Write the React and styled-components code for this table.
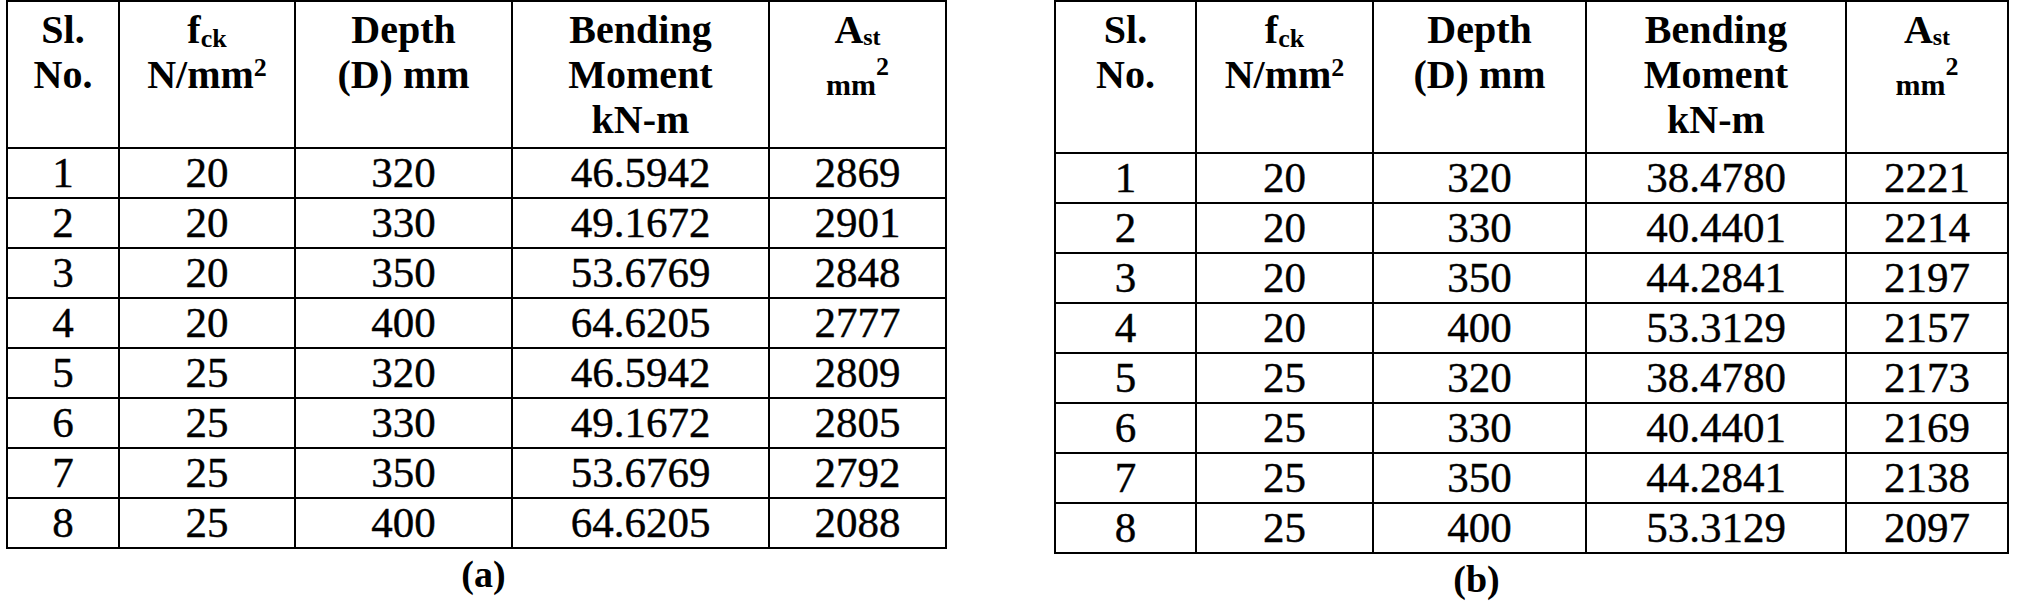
import React from 'react';
import styled, { createGlobalStyle } from 'styled-components';

const GlobalStyle = createGlobalStyle`
  html, body {
    margin: 0;
    padding: 0;
    background: #fff;
  }
  body {
    font-family: "Liberation Serif", "Times New Roman", serif;
    color: #000;
  }
`;

const Page = styled.div`
  display: flex;
  align-items: flex-start;
  gap: 107px;
  padding-left: 6px;
  width: 2021px;
  height: 605px;
  box-sizing: border-box;
  overflow: hidden;
`;

const Figure = styled.div`
  display: flex;
  flex-direction: column;
`;

const Table = styled.table`
  border-collapse: collapse;
  table-layout: fixed;
  width: ${(p) => p.$width}px;
`;

const Col = styled.col`
  width: ${(p) => p.$w}px;
`;

const HeadRow = styled.tr`
  height: ${(p) => p.$h}px;
`;

const Head = styled.th`
  border: 2px solid #000;
  padding: 5px 0 0;
  vertical-align: top;
  text-align: center;
  font-size: 40px;
  font-weight: bold;
  line-height: 45px;
`;

const Sub = styled.sub`
  font-size: ${(p) => p.$size || 26}px;
  line-height: 0;
  vertical-align: ${(p) => p.$drop || -4}px;
`;

const Sup = styled.sup`
  font-size: 26px;
  line-height: 0;
  vertical-align: 12px;
`;

const Unit = styled.span`
  display: block;
  font-size: 30px;
  line-height: 66px;
`;

const UnitSup = styled.sup`
  font-size: 26px;
  line-height: 0;
  vertical-align: 20px;
`;

const Row = styled.tr`
  height: 50px;
`;

const Cell = styled.td`
  border: 2px solid #000;
  padding: 0;
  text-align: center;
  vertical-align: middle;
  font-size: 43px;
  line-height: 46px;
  -webkit-text-stroke: 0.4px #000;
`;

const Caption = styled.div`
  margin-top: 3px;
  text-align: center;
  font-size: 38px;
  font-weight: bold;
  line-height: 44px;
  padding-left: ${(p) => Math.max(0, p.$shift * 2)}px;
  padding-right: ${(p) => Math.max(0, -p.$shift * 2)}px;
`;

const tables = [
  {
    label: '(a)',
    width: 941,
    cols: [112, 176, 217, 257, 177],
    head: 147,
    shift: 7,
    rows: [
      ['1', '20', '320', '46.5942', '2869'],
      ['2', '20', '330', '49.1672', '2901'],
      ['3', '20', '350', '53.6769', '2848'],
      ['4', '20', '400', '64.6205', '2777'],
      ['5', '25', '320', '46.5942', '2809'],
      ['6', '25', '330', '49.1672', '2805'],
      ['7', '25', '350', '53.6769', '2792'],
      ['8', '25', '400', '64.6205', '2088'],
    ],
  },
  {
    label: '(b)',
    width: 955,
    cols: [141, 177, 213, 260, 162],
    head: 152,
    shift: -55,
    rows: [
      ['1', '20', '320', '38.4780', '2221'],
      ['2', '20', '330', '40.4401', '2214'],
      ['3', '20', '350', '44.2841', '2197'],
      ['4', '20', '400', '53.3129', '2157'],
      ['5', '25', '320', '38.4780', '2173'],
      ['6', '25', '330', '40.4401', '2169'],
      ['7', '25', '350', '44.2841', '2138'],
      ['8', '25', '400', '53.3129', '2097'],
    ],
  },
];

const ResultTable = ({ data }) => (
  <Figure>
    <Table $width={data.width}>
      <colgroup>
        {data.cols.map((w, i) => (
          <Col key={i} $w={w} />
        ))}
      </colgroup>
      <thead>
        <HeadRow $h={data.head}>
          <Head>
            Sl.<br />No.
          </Head>
          <Head>
            f<Sub>ck</Sub>
            <br />
            N/mm<Sup>2</Sup>
          </Head>
          <Head>
            Depth<br />(D) mm
          </Head>
          <Head>
            Bending<br />Moment<br />kN-m
          </Head>
          <Head>
            A<Sub $size={24} $drop={-2}>st</Sub>
            <Unit>
              mm<UnitSup>2</UnitSup>
            </Unit>
          </Head>
        </HeadRow>
      </thead>
      <tbody>
        {data.rows.map((r) => (
          <Row key={r[0]}>
            {r.map((v, i) => (
              <Cell key={i}>{v}</Cell>
            ))}
          </Row>
        ))}
      </tbody>
    </Table>
    <Caption $shift={data.shift}>{data.label}</Caption>
  </Figure>
);

const App = () => (
  <>
    <GlobalStyle />
    <Page>
      {tables.map((t) => (
        <ResultTable key={t.label} data={t} />
      ))}
    </Page>
  </>
);

export default App;
